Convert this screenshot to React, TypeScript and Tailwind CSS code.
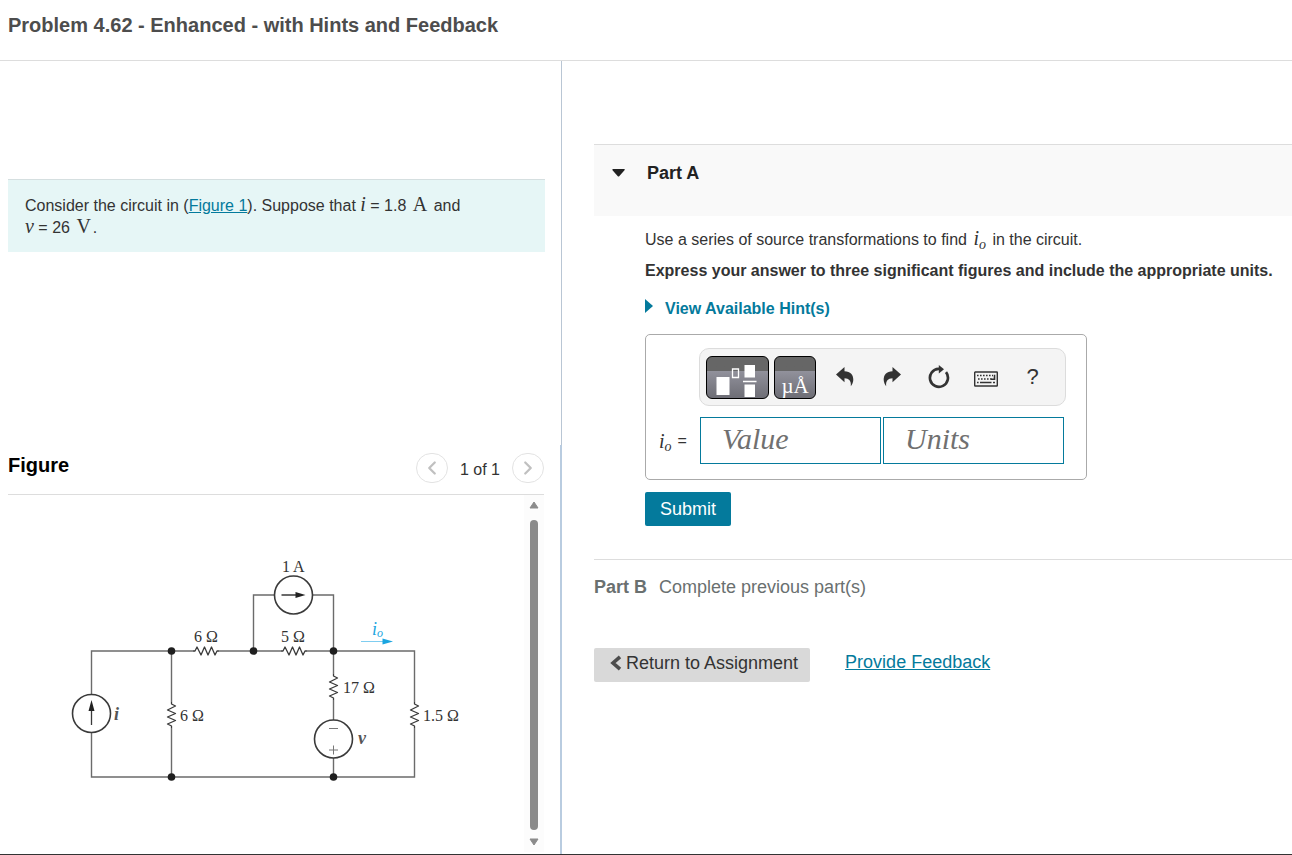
import { ChevronLeft, ChevronRight } from "lucide-react";
import type { ReactNode } from "react";

function MathVar({ children }: { children: ReactNode }) {
  return <i className="font-['Liberation_Serif',serif] text-xl leading-none">{children}</i>;
}

function MathUnit({ children }: { children: ReactNode }) {
  return <span className="mx-0.5 font-['Liberation_Serif',serif] text-xl leading-none">{children}</span>;
}

function OutputCurrent() {
  return (
    <span className="mx-0.5 font-['Liberation_Serif',serif] italic text-xl leading-none">
      i<sub className="text-sm leading-none">o</sub>
    </span>
  );
}

// zigzags are 26 units long, drawn from the origin
function Resistor({ x, y, vertical = false }: { x: number; y: number; vertical?: boolean }) {
  return (
    <path
      transform={`translate(${x} ${y})${vertical ? " rotate(90)" : ""}`}
      d="M0 0 L2 0 L4 -4 L8 4 L11.5 -4 L15 4 L18.5 -4 L22 4 L24 0 L26 0"
      fill="none"
      stroke="#3a3a3a"
      strokeWidth="1.3"
      strokeLinejoin="round"
    />
  );
}

const nodes = [
  [111.5, 106],
  [193.5, 106],
  [273.5, 106],
  [111.5, 232],
  [273.5, 232],
];

function Circuit() {
  return (
    <svg
      viewBox="0 0 420 250"
      className="w-[420px] h-[250px] shrink-0 font-['Liberation_Serif',serif]"
      role="img"
      aria-label="Circuit diagram"
    >
      <g fill="none" stroke="#6b6b6b" strokeWidth="1.4">
        <path d="M31.5 149.5 V106 H133" />
        <path d="M159 106 H221" />
        <path d="M247 106 H354.5 V157" />
        <path d="M354.5 183 V232 H31.5 V187.5" />
        <path d="M111.5 106 V157 M111.5 183 V232" />
        <path d="M193.5 106 V50 H214.5 M252.5 50 H273.5 V129" />
        <path d="M273.5 155 V175 M273.5 213 V232" />
      </g>
      <Resistor x={133} y={106} />
      <Resistor x={221} y={106} />
      <Resistor x={111.5} y={157} vertical />
      <Resistor x={273.5} y={129} vertical />
      <Resistor x={354.5} y={157} vertical />
      <g fill="none" stroke="#3a3a3a" strokeWidth="1.6">
        <circle cx="31.5" cy="168.5" r="19" />
        <circle cx="233.5" cy="50" r="19" />
        <circle cx="273.5" cy="194" r="19" />
        <path d="M31.5 180 V164 M221.5 50 H238" strokeWidth="1.3" />
        <path d="M269 183.5 H278 M269 205 H278 M273.5 200.5 V209.5" stroke="#777777" strokeWidth="1" />
      </g>
      <path d="M31.5 155 L34.5 166 H28.5 Z M245.5 50 L235.5 47 V53 Z" fill="#222222" />
      {nodes.map(([cx, cy]) => (
        <circle key={`${cx}-${cy}`} cx={cx} cy={cy} r="3.8" fill="#1f1f1f" />
      ))}
      <path d="M301 96.5 H324" stroke="#7fcdf0" />
      <path d="M333 96.5 L322.5 93.5 V99.5 Z" fill="#1ba5e0" />
      <g fontSize="16" fill="#333333">
        <text x="222" y="27">1 A</text>
        <text x="134" y="97">6 Ω</text>
        <text x="221" y="97">5 Ω</text>
        <text x="120" y="176">6 Ω</text>
        <text x="283" y="148">17 Ω</text>
        <text x="363" y="176">1.5 Ω</text>
      </g>
      <g fontSize="18" fontStyle="italic" fontWeight="bold" fill="#555555">
        <text x="54" y="175">i</text>
        <text x="298" y="199">v</text>
      </g>
      <g fontStyle="italic" fill="#1ba5e0">
        <text x="312" y="90" fontSize="18">i</text>
        <text x="317" y="92" fontSize="12">o</text>
      </g>
    </svg>
  );
}

function Scrollbar() {
  return (
    <div className="flex w-5 flex-col items-center bg-[#fcfcfc] pt-1.5 pb-1.5">
      <svg viewBox="0 0 10 8" className="h-2 w-2.5" aria-hidden="true">
        <path d="M5 1 L9 7 H1 Z" fill="#8b8b8b" stroke="#8b8b8b" strokeLinejoin="round" />
      </svg>
      <div className="mt-[11px] mb-2 w-2 flex-1 rounded-full bg-[#8b8b8b]" />
      <svg viewBox="0 0 10 8" className="h-2 w-2.5" aria-hidden="true">
        <path d="M5 7 L9 1 H1 Z" fill="#8b8b8b" stroke="#8b8b8b" strokeLinejoin="round" />
      </svg>
    </div>
  );
}

function FigurePanel() {
  return (
    <section id="figure" className="flex flex-1 flex-col border-r-2 border-[#b9cce0] pl-2 pr-4">
      <div className="flex h-[50px] items-start justify-between border-b border-[#dddddd]">
        <h2 className="pt-1.5 text-xl font-bold text-black">Figure</h2>
        <div className="flex items-center gap-3 pt-2 text-base text-[#333333]">
          <button
            type="button"
            aria-label="Previous figure"
            className="flex h-[30px] w-8 items-center justify-center rounded-full border border-[#e3e3e3] text-[#c0c0c0]"
          >
            <ChevronLeft size={22} strokeWidth={2.5} />
          </button>
          <span className="pt-1">1 of 1</span>
          <button
            type="button"
            aria-label="Next figure"
            className="flex h-[30px] w-8 items-center justify-center rounded-full border border-[#e3e3e3] text-[#c0c0c0]"
          >
            <ChevronRight size={22} strokeWidth={2.5} />
          </button>
        </div>
      </div>
      <div className="mb-0.5 flex flex-1 justify-between">
        <div className="pt-[50px] pl-[52px]">
          <Circuit />
        </div>
        <Scrollbar />
      </div>
    </section>
  );
}

function ToolbarIcon({ label, children }: { label: string; children: ReactNode }) {
  return (
    <button type="button" aria-label={label} className="flex h-8 w-[47px] items-center justify-center text-[#333333]">
      {children}
    </button>
  );
}

function Toolbar() {
  return (
    <div className="ml-[53px] flex h-[58px] w-[367px] items-center rounded-[10px] border border-[#dcdcdc] bg-[#f4f4f4] pl-1.5">
      <button
        type="button"
        aria-label="Templates"
        className="h-[43px] w-[63px] rounded-md border border-black bg-linear-to-b from-[#666666] from-35% via-[#91919b] via-35% to-[#6e6e76]"
      >
        <svg viewBox="0 0 61 41" className="h-[41px] w-[61px]" aria-hidden="true">
          <path d="M9.5 20 H22.5 V38 H9.5 Z M37.5 8 H48 V20.5 H37.5 Z M37.5 27.5 H48 V40 H37.5 Z" fill="#ffffff" />
          <path d="M25.5 12 H31.5 V20.5 H25.5 Z M36 24.5 H49.5" fill="none" stroke="#ffffff" strokeWidth="1.3" />
        </svg>
      </button>
      <button
        type="button"
        aria-label="Symbols"
        className="ml-[5px] flex h-[43px] w-[42px] items-end justify-center rounded-md border border-black bg-linear-to-b from-[#666666] from-35% via-[#91919b] via-35% to-[#6e6e76] font-['Liberation_Serif',serif] text-[21px] leading-6 text-white"
      >
        µÅ
      </button>
      <div className="ml-[5px] flex">
        <ToolbarIcon label="Undo">
          <svg viewBox="0 0 20 20" className="h-5 w-5" fill="currentColor" aria-hidden="true">
            <path d="M1 7.5 L9.5 0 V4.2 C15.5 4.2 18.5 8 18.3 13 C18.2 15.500 17 18 15.8 19.3 C16.5 14 14 11.2 9.5 11.2 V15.2 Z" />
          </svg>
        </ToolbarIcon>
        <ToolbarIcon label="Redo">
          <svg viewBox="0 0 20 20" className="h-5 w-5" fill="currentColor" aria-hidden="true">
            <path d="M19 7.5 L10.5 0 V4.2 C4.5 4.2 1.5 8 1.7 13 C1.8 15.500 3 18 4.2 19.3 C3.5 14 6 11.2 10.500 11.2 V15.2 Z" />
          </svg>
        </ToolbarIcon>
        <ToolbarIcon label="Reset">
          <svg viewBox="0 0 24 24" className="h-6 w-6" aria-hidden="true">
            <path d="M19 7.200 A9 9 0 1 1 11.500 3.800 H14" fill="none" stroke="currentColor" strokeWidth="2.700" />
            <path d="M11.800 0 L17 4.200 L11.800 8.400 Z" fill="currentColor" />
          </svg>
        </ToolbarIcon>
        <ToolbarIcon label="Keyboard shortcuts">
          <svg viewBox="0 0 24 16" className="mt-1 h-4 w-6" fill="none" stroke="currentColor" aria-hidden="true">
            <rect x="0.7" y="1" width="22.6" height="14" rx="0.5" strokeWidth="1.4" />
            <path d="M3 4.5 H19 M4 8 H18" strokeWidth="1.6" strokeDasharray="1.6 1.4" />
            <path d="M20.5 3.7 V8.2 H17 M3 11.5 H4.6 M6 11.5 H17.5 M19 11.5 H21" strokeWidth="1.6" />
          </svg>
        </ToolbarIcon>
        <ToolbarIcon label="Help">
          <span className="text-[22px] leading-none">?</span>
        </ToolbarIcon>
      </div>
    </div>
  );
}

function AnswerBox() {
  const field =
    "h-[47px] w-[181px] border border-[#047a9c] bg-white pl-[21px] pb-1 font-['Liberation_Serif',serif] text-[30px] italic text-[#333333] placeholder:text-[#707070]";

  return (
    <div className="w-[442px] rounded-[5px] border border-[#aaaaaa] pt-[13px] pb-[15px]">
      <Toolbar />
      <div className="mt-[11px] flex items-center">
        <span className="flex w-[54px] items-center gap-1 pl-[11px] text-base">
          <OutputCurrent /> =
        </span>
        <input type="text" aria-label="Value" placeholder="Value" className={field} />
        <input type="text" aria-label="Units" placeholder="Units" className={`ml-0.5 ${field}`} />
      </div>
    </div>
  );
}

export default function App() {
  return (
    <div className="flex min-h-screen flex-col border-b border-[#333333] bg-white font-['Liberation_Sans',sans-serif] text-[#333333]">
      <header className="flex h-[61px] items-start border-b border-[#dddddd] px-2 pt-[11px]">
        <h1 className="text-xl leading-7 font-bold text-[#4d4d4d]">
          Problem 4.62 - Enhanced - with Hints and Feedback
        </h1>
      </header>

      <main className="grid flex-1 grid-cols-[43.5%_1fr]">
        <div className="flex flex-col">
          <div className="h-96 border-r border-[#b9c6d4] pt-[118px] pr-4 pl-2">
            <p className="h-[73px] border-t border-[#d5dfe0] bg-[#e6f6f6] pt-3.5 pr-16 pl-[17px] text-base leading-5">
              Consider the circuit in (
              <a href="#figure" className="text-[#047a9c] underline">
                Figure 1
              </a>
              ). Suppose that <MathVar>i</MathVar> = 1.8 <MathUnit>A</MathUnit> and{" "}
              <br />
              <MathVar>v</MathVar> = 26 <MathUnit>V</MathUnit>.
            </p>
          </div>
          <FigurePanel />
        </div>

        <div className="pt-[83px] pl-8">
          <div className="flex h-[72px] items-start border-t border-[#dddddd] bg-[#f9f9f9] pt-4 pl-[18px]">
            <button type="button" className="flex items-center gap-[22px] text-lg leading-6 font-bold text-[#222222]">
              <svg viewBox="0 0 13 8" className="h-2 w-[13px]" fill="currentColor" aria-hidden="true">
                <path d="M0.5 0 H12.5 Q13 0.5 12.5 1.2 L7.2 7.2 Q6.5 8 5.8 7.2 L0.5 1.2 Z" />
              </svg>
              Part A
            </button>
          </div>

          <div className="pt-3 pl-[51px] text-base leading-5">
            <p className="h-5">
              Use a series of source transformations to find <OutputCurrent /> in the circuit.
            </p>
            <p className="mt-[13px] font-bold">
              Express your answer to three significant figures and include the appropriate units.
            </p>
            <button type="button" className="mt-[18px] flex items-start gap-3 font-bold text-[#047a9c]">
              <svg viewBox="0 0 8 14" className="h-3.5 w-2" fill="currentColor" aria-hidden="true">
                <path d="M0 0 L8 7 L0 14 Z" />
              </svg>
              View Available Hint(s)
            </button>
            <div className="mt-[15px]">
              <AnswerBox />
            </div>
            <button type="submit" className="mt-3 h-[34px] w-[86px] rounded-xs bg-[#047a9c] text-lg text-white">
              Submit
            </button>
          </div>

          <div className="mt-[33px] flex gap-3 border-t border-[#dddddd] pt-[15px] text-lg leading-6 text-[#6a7070]">
            <span className="font-bold">Part B</span>
            <span>Complete previous part(s)</span>
          </div>

          <div className="mt-[49px] flex gap-[35px] text-lg">
            <button
              type="button"
              className="flex h-[34px] items-center gap-1 rounded-xs bg-[#d9d9d9] pr-3 pb-1 pl-4 text-[#333333]"
            >
              <svg viewBox="0 0 12 16" className="h-4 w-3" aria-hidden="true">
                <path d="M10 1.8 L3 8 L10 14.2" fill="none" stroke="#4d4d4d" strokeWidth="3.6" />
              </svg>
              Return to Assignment
            </button>
            <a href="#feedback" className="text-[#047a9c] underline">
              Provide Feedback
            </a>
          </div>
        </div>
      </main>
    </div>
  );
}
